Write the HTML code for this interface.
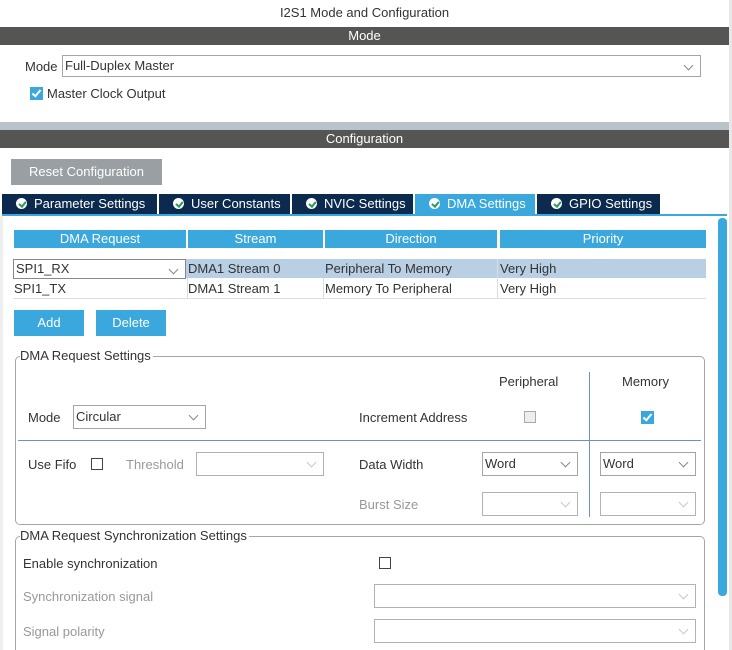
<!DOCTYPE html>
<html style="overflow:hidden;height:650px"><head><meta charset="utf-8"><style>
*{margin:0;padding:0;box-sizing:border-box}
body{width:732px;height:650px;overflow:hidden;background:#fff;font-family:"Liberation Sans","DejaVu Sans",sans-serif;font-size:13px;color:#333;position:relative}
.a{position:absolute;white-space:nowrap}
.bar{position:absolute;left:0;width:729px;height:18px;background:#555654;color:#fff;text-align:center;line-height:18px}
.sel{position:absolute;border:1px solid #a3a6a8;background:#fff;height:24px;line-height:22px;padding-left:2px}
.sel:after{content:"";position:absolute;right:8px;top:6px;width:6px;height:6px;border-right:1px solid #888;border-bottom:1px solid #888;transform:rotate(45deg)}
.sel.d{border-color:#b0b3b5}
.sel.d:after{border-color:#c8c8c8}
.cb{position:absolute;width:12px;height:12px;border:1px solid #444;background:#fff}
.cbc{position:absolute;width:13px;height:13px;background:#3aa8dc}
.cbc:after{content:"";position:absolute;left:4px;top:1px;width:3px;height:7px;border-right:2px solid #fff;border-bottom:2px solid #fff;transform:rotate(40deg)}
.tab{position:absolute;top:194px;height:20px;background:#0b2a4e;color:#fff;line-height:20px;padding-left:14px}
.tab i{display:inline-block;width:11px;height:11px;border-radius:50%;background:#fff;position:relative;vertical-align:-1px;margin-right:7px}
.tab i:after{content:"";position:absolute;left:3.5px;top:1.5px;width:2.5px;height:5px;border-right:2px solid #2e9a5c;border-bottom:2px solid #2e9a5c;transform:rotate(40deg)}
.th{position:absolute;top:230px;height:18px;background:#3aa8dc;color:#fff;text-align:center;line-height:18px}
.btn{position:absolute;background:#3aa8dc;color:#fff;text-align:center;line-height:26px;height:26px}
.fs{position:absolute;border:1px solid #a3a6a8;border-radius:5px}
.lg{position:absolute;background:#fff;padding-right:2px}
.g{color:#999}
</style></head><body>
<div class="a" style="left:0;top:5px;width:729px;text-align:center">I2S1 Mode and Configuration</div>
<div style="position:absolute;left:729px;top:0;width:3px;height:650px;background:#e8e8e8"></div>
<div class="bar" style="top:27px">Mode</div>
<div class="a" style="left:25px;top:59px">Mode</div>
<div class="sel" style="left:62px;top:55px;width:639px;height:22px;line-height:20px">Full-Duplex Master</div>
<div class="cbc" style="left:30px;top:87px"></div>
<div class="a" style="left:47px;top:86px">Master Clock Output</div>
<div style="position:absolute;left:0;top:122px;width:729px;height:8px;background:#b9c4ca"></div>
<div class="bar" style="top:130px">Configuration</div>
<div class="btn" style="left:11px;top:159px;width:151px;background:#9a9fa3;line-height:26px">Reset Configuration</div>
<div class="tab" style="left:2px;width:155px"><i></i>Parameter Settings</div>
<div class="tab" style="left:159px;width:131px"><i></i>User Constants</div>
<div class="tab" style="left:292px;width:121px"><i></i>NVIC Settings</div>
<div class="tab" style="left:415px;width:120px;background:#3aa8dc"><i></i>DMA Settings</div>
<div class="tab" style="left:537px;width:123px"><i></i>GPIO Settings</div>
<div style="position:absolute;left:2px;top:214px;width:725px;height:2px;background:#3aa8dc"></div>
<div style="position:absolute;left:0;top:216px;width:3px;height:434px;background:#eee"></div>
<div style="position:absolute;left:718px;top:218px;width:9px;height:378px;background:#3aa8dc;border-radius:4px"></div>
<div class="th" style="left:14px;width:172px">DMA Request</div>
<div class="th" style="left:188px;width:135px">Stream</div>
<div class="th" style="left:325px;width:172px">Direction</div>
<div class="th" style="left:500px;width:206px">Priority</div>
<div style="position:absolute;left:186px;top:259px;width:520px;height:19px;background:#b8cfe4"></div>
<div style="position:absolute;left:13px;top:278px;width:693px;height:21px;border-bottom:1px solid #ddd"></div>
<div style="position:absolute;left:187px;top:278px;width:1px;height:20px;background:#ddd"></div>
<div style="position:absolute;left:323px;top:278px;width:1px;height:20px;background:#ddd"></div>
<div style="position:absolute;left:497px;top:259px;width:1px;height:39px;background:#ddd"></div>
<div class="sel" style="left:13px;top:259px;width:173px;height:20px;line-height:18px;border-color:#888">SPI1_RX</div>
<div class="a" style="left:188px;top:261px">DMA1 Stream 0</div>
<div class="a" style="left:325px;top:261px">Peripheral To Memory</div>
<div class="a" style="left:500px;top:261px">Very High</div>
<div class="a" style="left:14px;top:281px">SPI1_TX</div>
<div class="a" style="left:188px;top:281px">DMA1 Stream 1</div>
<div class="a" style="left:325px;top:281px">Memory To Peripheral</div>
<div class="a" style="left:500px;top:281px">Very High</div>
<div class="btn" style="left:14px;top:310px;width:70px">Add</div>
<div class="btn" style="left:96px;top:310px;width:70px">Delete</div>
<div class="fs" style="left:15px;top:356px;width:690px;height:169px"></div>
<div class="lg a" style="left:20px;top:348px">DMA Request Settings</div>
<div class="a" style="left:499px;top:374px">Peripheral</div>
<div class="a" style="left:622px;top:374px">Memory</div>
<div style="position:absolute;left:589px;top:372px;width:1px;height:145px;background:#6f8fc9"></div>
<div style="position:absolute;left:18px;top:440px;width:683px;height:1px;background:#6f8fc9"></div>
<div class="a" style="left:28px;top:410px">Mode</div>
<div class="sel" style="left:73px;top:405px;width:133px">Circular</div>
<div class="a" style="left:359px;top:410px">Increment Address</div>
<div class="cb" style="left:524px;top:411px;border-color:#aaa;background:#eee"></div>
<div class="cbc" style="left:641px;top:411px"></div>
<div class="a" style="left:28px;top:457px">Use Fifo</div>
<div class="cb" style="left:91px;top:458px"></div>
<div class="a g" style="left:126px;top:457px">Threshold</div>
<div class="sel d" style="left:196px;top:452px;width:128px"></div>
<div class="a" style="left:359px;top:457px">Data Width</div>
<div class="sel" style="left:482px;top:452px;width:96px">Word</div>
<div class="sel" style="left:600px;top:452px;width:96px">Word</div>
<div class="a g" style="left:359px;top:497px">Burst Size</div>
<div class="sel d" style="left:482px;top:492px;width:96px"></div>
<div class="sel d" style="left:600px;top:492px;width:96px"></div>
<div class="fs" style="left:15px;top:536px;width:690px;height:114px;border-bottom:none;border-radius:5px 5px 0 0"></div>
<div class="lg a" style="left:20px;top:528px">DMA Request Synchronization Settings</div>
<div class="a" style="left:23px;top:556px">Enable synchronization</div>
<div class="cb" style="left:379px;top:557px"></div>
<div class="a g" style="left:23px;top:589px">Synchronization signal</div>
<div class="sel d" style="left:374px;top:584px;width:322px"></div>
<div class="a g" style="left:23px;top:624px">Signal polarity</div>
<div class="sel d" style="left:374px;top:619px;width:322px"></div>
</body></html>
